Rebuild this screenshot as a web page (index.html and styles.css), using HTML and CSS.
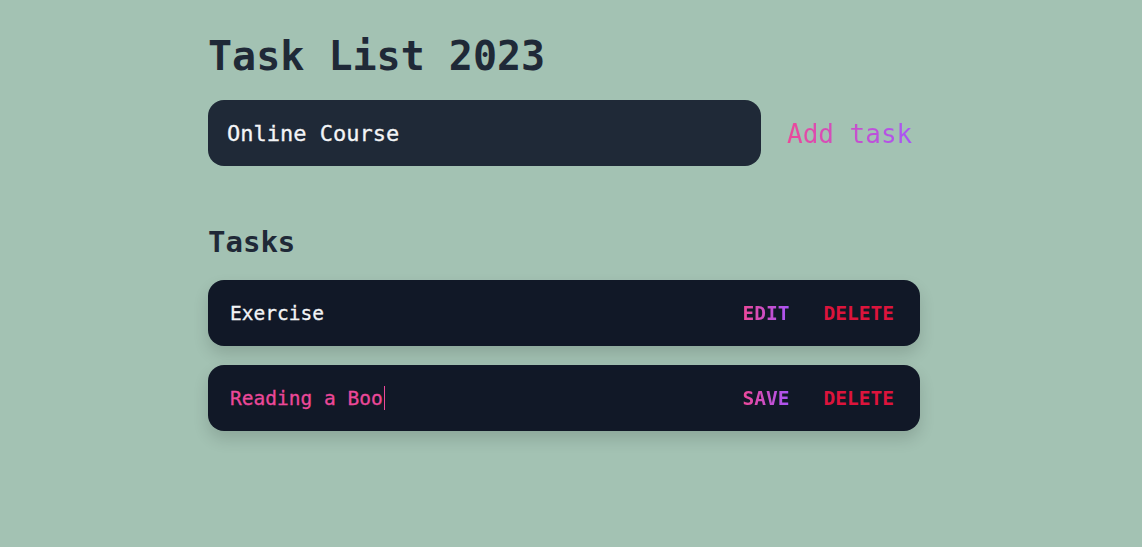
FILE: index.html
```html
<!DOCTYPE html>
<html>
<head>
<meta charset="utf-8">
<link rel="stylesheet" href="styles.css">
</head>
<body>
<main class="app">
  <h1 class="title">Task List 2023</h1>
  <form class="new-task">
    <input class="new-task-input" type="text" value="Online Course">
    <button type="button" class="add-btn"><span class="grad">Add task</span></button>
  </form>
  <section class="tasks">
    <h2 class="tasks-title">Tasks</h2>
    <div class="task-list">
      <div class="task">
        <span class="task-text">Exercise</span>
        <div class="actions">
          <button type="button" class="edit"><span class="grad">EDIT</span></button>
          <button type="button" class="delete">DELETE</button>
        </div>
      </div>
      <div class="task">
        <span class="task-text editing">Reading a Boo<span class="caret"></span></span>
        <div class="actions">
          <button type="button" class="edit"><span class="grad">SAVE</span></button>
          <button type="button" class="delete">DELETE</button>
        </div>
      </div>
    </div>
  </section>
</main>
</body>
</html>
```
FILE: styles.css
```css
* { box-sizing: border-box; }
html, body { margin: 0; padding: 0; }
body {
  background: #a3c2b3;
  font-family: "DejaVu Sans Mono", monospace;
  min-height: 547px;
}
.app {
  width: 726px;
  margin: 0 auto;
  padding-top: 32px;
}
.title {
  margin: 0 0 20px;
  font-size: 40px;
  line-height: 48px;
  font-weight: bold;
  color: #1f2937;
}
.new-task {
  display: flex;
  align-items: center;
  gap: 26px;
  margin: 0;
}
.new-task-input {
  width: 553px;
  height: 66px;
  border: none;
  border-radius: 16px;
  background: #1f2937;
  color: #f3f4f6;
  font-family: inherit;
  font-size: 22px;
  padding: 0 19px;
  outline: none;
  -webkit-text-stroke: 0.3px #f3f4f6;
}
.add-btn {
  background: none;
  border: none;
  padding: 0 0 0 0;
  margin-top: 2px;
  font-family: inherit;
  font-size: 26px;
  cursor: pointer;
}
.grad {
  background: linear-gradient(to right, #ec4899, #a855f7);
  -webkit-background-clip: text;
  background-clip: text;
  color: transparent;
}
.tasks { margin-top: 58px; }
.tasks-title {
  margin: 0 0 20px;
  font-size: 29px;
  line-height: 36px;
  font-weight: bold;
  color: #1f2937;
}
.task-list {
  width: 712px;
  display: flex;
  flex-direction: column;
  gap: 19px;
}
.task {
  height: 66px;
  background: #111827;
  border-radius: 16px;
  display: flex;
  align-items: center;
  justify-content: space-between;
  padding: 0 26px 0 22px;
  box-shadow: 0 8px 16px rgba(0, 0, 0, 0.14);
}
.task-text {
  color: #f3f4f6;
  font-size: 19.5px;
  display: flex;
  align-items: center;
  -webkit-text-stroke: 0.3px currentColor;
}
.task-text.editing { color: #ec4899; }
.caret {
  display: inline-block;
  width: 1px;
  height: 24px;
  background: #ec4899;
  margin-left: 1px;
}
.actions { display: flex; gap: 34px; }
.actions button {
  background: none;
  border: none;
  padding: 0;
  font-family: inherit;
  font-size: 19.5px;
  font-weight: bold;
  cursor: pointer;
}
.delete { color: #dc143c; }
```
